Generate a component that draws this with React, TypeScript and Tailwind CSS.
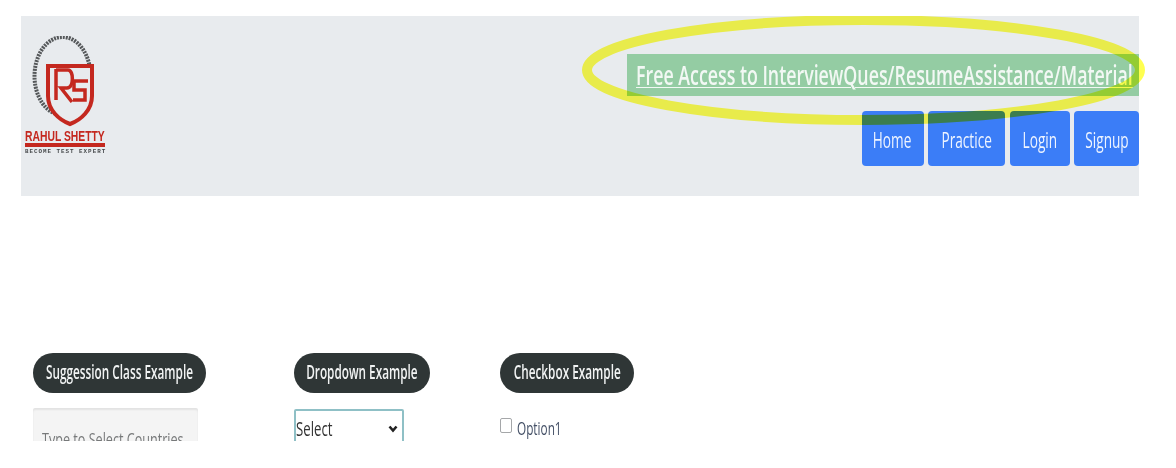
const navLinks = [
  { label: "Home", width: "w-[62px]" },
  { label: "Practice", width: "w-[77px]" },
  { label: "Login", width: "w-[60px]" },
  { label: "Signup", width: "w-[65px]" },
];

function Logo() {
  return (
    <div className="flex w-[80px] flex-col items-stretch blur-[0.6px]">
      <svg width="80" height="110" viewBox="0 0 80 110" className="block">
        <ellipse cx="37.5" cy="40" rx="28" ry="39" fill="none" stroke="#55585a" strokeWidth="4" strokeDasharray="2 1" />
        <path d="M23 30 H67 V60 C67 74 56 84 45 88 C34 84 23 74 23 60 Z" fill="#e8ebee" stroke="#c4281f" strokeWidth="4" />
        <path d="M31 33 V64 M31 34 H43 C49 34 49 52 42 52 H36 L47 66" fill="none" stroke="#c4281f" strokeWidth="3.5" />
        <path d="M63 45 H49 V54 H60 V64 H48" fill="none" stroke="#c4281f" strokeWidth="3.5" />
      </svg>
      <div className="-mt-[17px] h-[13px] origin-left scale-x-[.69] whitespace-nowrap font-['Liberation_Sans',sans-serif] text-[15px] leading-[13px] font-bold text-[#c4281f]">
        RAHUL SHETTY
      </div>
      <div className="mt-[1px] h-[4px] bg-[#c4281f]" />
      <div className="mt-[2px] origin-left scale-x-[.98] whitespace-nowrap font-['Liberation_Mono',monospace] text-[6px] leading-[6px] font-bold tracking-[1px] text-[#45484a]">
        BECOME TEST EXPERT
      </div>
    </div>
  );
}

function Header() {
  return (
    <header className="relative flex h-[180px] justify-between bg-[#e8ebee] pt-[20px] pl-[4px]">
      <Logo />
      <div className="flex flex-col items-end pt-[18px]">
        <div className="flex h-[42px] w-[512px] items-center bg-[#94cca3] pl-[9px]">
          <a className="origin-left scale-x-[.659] whitespace-nowrap font-['Open_Sans',sans-serif] text-[27px] leading-[32px] font-semibold text-[#f2f8f4] underline decoration-1 underline-offset-2 blur-[0.5px]">
            Free Access to InterviewQues/ResumeAssistance/Material
          </a>
        </div>
        <nav className="mt-[15px] flex gap-[4.5px]">
          {navLinks.map((link) => (
            <a
              key={link.label}
              className={`flex h-[55px] items-center justify-center rounded-[4px] bg-[#3b7df7] ${link.width}`}
            >
              <span className="mt-[2px] scale-x-[.62] font-['Open_Sans',sans-serif] text-[22px] font-normal text-[#eef4ff] blur-[0.5px]">
                {link.label}
              </span>
            </a>
          ))}
        </nav>
      </div>
      {/* hand drawn highlight over the link */}
      <svg
        width="1126"
        height="180"
        viewBox="0 0 1126 180"
        className="pointer-events-none absolute top-0 left-0 mix-blend-multiply"
      >
        <ellipse cx="842.5" cy="54" rx="276.5" ry="50" fill="none" stroke="#ffff50" strokeWidth="10" />
      </svg>
    </header>
  );
}

function Pill({ children, width }: { children: string; width: string }) {
  return (
    <div className={`flex h-[40px] items-center justify-center rounded-[20px] bg-[#2f3636] ${width}`}>
      <span className="-mt-[2px] scale-x-[.62] whitespace-nowrap font-['Open_Sans',sans-serif] text-[19px] font-semibold text-[#f1f3f3] blur-[0.5px]">
        {children}
      </span>
    </div>
  );
}

export default function App() {
  return (
    <div className="h-[468px] bg-white">
      <div className="h-[441px] overflow-hidden pt-[16px] pr-[37px] pl-[21px]">
        <Header />
        <section className="mt-[157px] flex pl-[12px]">
          <div className="w-[261px]">
            <Pill width="w-[173px]">Suggession Class Example</Pill>
            <div className="mt-[15px] flex h-[50px] w-[165px] items-center rounded-[2px] bg-[#f4f4f4] pl-[9px] shadow-[inset_0_2px_2px_rgba(0,0,0,0.07)]">
              <span className="mt-[12px] origin-left scale-x-[.7] whitespace-nowrap font-['Open_Sans',sans-serif] text-[18px] text-[#77797a] blur-[0.5px]">
                Type to Select Countries
              </span>
            </div>
          </div>
          <div className="w-[206px]">
            <Pill width="w-[136px]">Dropdown Example</Pill>
            <div className="mt-[16px] flex h-[50px] w-[110px] justify-between rounded-[2px] border-2 border-[#8fc0c6] bg-white pt-[5px] pr-[4px]">
              <span className="origin-left scale-x-[.66] font-['Open_Sans',sans-serif] text-[20px] leading-[26px] text-[#333] blur-[0.4px]">
                Select
              </span>
              <svg width="10" height="8" viewBox="0 0 10 8" className="mt-[9px] blur-[0.3px]">
                <path d="M1.5 1.5 L5 5.5 L8.5 1.5" fill="none" stroke="#222" strokeWidth="2.6" />
              </svg>
            </div>
          </div>
          <div>
            <Pill width="w-[134px]">Checkbox Example</Pill>
            <div className="mt-[25px] flex items-start gap-[5px]">
              <span className="h-[15px] w-[12px] rounded-[2px] border border-[#a5a7a9] bg-white" />
              <span className="origin-left scale-x-[.62] font-['Open_Sans',sans-serif] text-[19px] leading-[20px] text-[#445066] blur-[0.4px]">
                Option1
              </span>
            </div>
          </div>
        </section>
      </div>
    </div>
  );
}
